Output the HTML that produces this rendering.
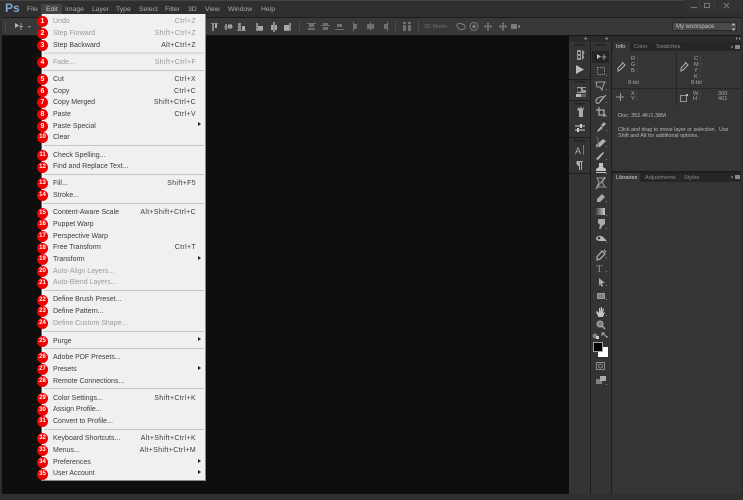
<!DOCTYPE html>
<html><head><meta charset="utf-8"><style>
html,body{margin:0;padding:0;background:#0e0e0e}
#a{position:relative;width:743px;height:500px;overflow:hidden;background:#0e0e0e;font-family:"Liberation Sans",sans-serif;font-size:7px;color:#b8b8b8}
#a div,#a span,#a svg{position:absolute}
.mb span{top:5px;font-size:6.8px;line-height:9px;color:#aaa;white-space:nowrap}
#m{left:41px;top:14px;width:165px;height:467px;background:#f0f0f0;border-right:1px solid #888;border-bottom:1px solid #888;border-left:1px solid #666;box-sizing:border-box}
.t,.k{position:absolute;font-size:7px;line-height:10px;color:#3c3c3c;white-space:nowrap;margin-top:-4px}
.t{left:53px}.k{right:547px;letter-spacing:.33px}
.d{color:#9a9a9a}
.s{position:absolute;left:44px;width:160px;height:1px;background:#c4c4c4}
.b{position:absolute;left:37px;width:11px;height:11px;margin-top:-5.5px;border-radius:50%;background:#f00000;color:#fff;font-size:6px;font-weight:bold;line-height:11px;text-align:center}
.r{position:absolute;left:198px;margin-top:-2px;width:0;height:0;border-left:3px solid #222;border-top:2px solid transparent;border-bottom:2px solid transparent}
.l{position:absolute;font-size:5.6px;line-height:8px;color:#a8a8a8;white-space:nowrap}
</style></head><body><div id="a">
<div style="left:0;top:0;width:743px;height:18px;background:#2f2f2f"></div>
<div style="left:0;top:17px;width:743px;height:1px;background:#1c1c1c"></div>
<div style="left:0;top:18px;width:743px;height:17px;background:#383838"></div>
<div style="left:0;top:35px;width:743px;height:1px;background:#161616"></div>
<div style="left:0;top:0;width:2px;height:500px;background:#2f2f2f"></div>
<div style="left:741px;top:0;width:2px;height:500px;background:#2f2f2f"></div>
<div style="left:0;top:494px;width:743px;height:6px;background:#2f2f2f"></div>
<div style="left:0;top:0;width:743px;height:1px;background:#444"></div>
<span style="left:5px;top:2px;font-size:12px;line-height:13px;font-weight:bold;color:#7fa8d0">Ps</span>
<div class="mb" style="left:0;top:0;width:500px;height:17px">
<div style="left:41px;top:4px;width:21px;height:13px;background:#444"></div>
<span style="left:27px">File</span><span style="left:46px;color:#ccc">Edit</span><span style="left:65px">Image</span><span style="left:92px">Layer</span><span style="left:116px">Type</span><span style="left:139px">Select</span><span style="left:165px">Filter</span><span style="left:188px">3D</span><span style="left:205px">View</span><span style="left:228px">Window</span><span style="left:261px">Help</span></div>
<svg style="left:0;top:18px" width="570" height="17" viewBox="0 0 570 17" fill="#8a8a8a">
<path d="M15 5l4 2.500-4 2.500z" fill="#bbb"/><path d="M21 5v7M19 8.500h4" stroke="#999" fill="none"/><path d="M28 8h3l-1.500 2z" fill="#999"/>
<rect x="5" y="3" width="1" height="11" fill="#4c4c4c"/>
<rect x="211" y="5" width="7" height="1"/><rect x="212" y="6" width="2" height="7"/><rect x="215" y="6" width="2" height="4" fill="#aaa"/>
<rect x="225" y="6" width="2" height="6"/><rect x="228" y="6.500" width="4" height="4" fill="#aaa"/><rect x="224" y="8.500" width="9" height="1"/>
<rect x="238" y="5" width="3" height="7"/><rect x="242" y="8" width="3" height="4" fill="#aaa"/><rect x="237" y="12" width="9" height="1"/>
<rect x="256" y="5" width="2" height="8"/><rect x="258" y="8" width="5" height="4" fill="#aaa"/><rect x="256" y="12" width="7" height="1"/>
<rect x="271" y="7" width="6" height="5" fill="#aaa"/><rect x="273" y="4" width="2" height="10"/>
<rect x="284" y="7" width="6" height="5" fill="#aaa"/><rect x="289" y="5" width="2" height="8"/><rect x="284" y="12" width="7" height="1"/>
<rect x="299" y="3" width="1" height="11" fill="#4c4c4c"/>
<g fill="#6f6f6f"><rect x="307" y="5" width="9" height="1"/><rect x="309" y="6" width="5" height="3"/><rect x="308" y="10" width="7" height="2"/>
<rect x="321" y="7" width="9" height="1"/><rect x="323" y="5" width="5" height="2"/><rect x="323" y="9" width="5" height="3"/>
<rect x="335" y="11" width="9" height="1"/><rect x="337" y="6" width="5" height="3"/>
<rect x="353" y="4" width="1" height="9"/><rect x="354" y="6" width="3" height="5"/>
<rect x="370" y="4" width="1" height="9"/><rect x="367" y="6" width="7" height="5"/>
<rect x="384" y="6" width="3" height="5"/><rect x="387" y="4" width="1" height="9"/></g>
<rect x="395" y="3" width="1" height="11" fill="#4c4c4c"/>
<g fill="#6f6f6f"><rect x="403" y="4" width="3" height="2"/><rect x="408" y="4" width="3" height="2"/><rect x="403" y="7" width="3" height="6"/><rect x="408" y="7" width="3" height="6"/></g>
<rect x="418" y="3" width="1" height="11" fill="#4c4c4c"/>
<path d="M457 8a3 2 0 0 1 5-2a4 3 0 0 1 2 5a4 2 0 0 1-5 0z" fill="none" stroke="#7c7c7c"/>
<circle cx="474" cy="8.500" r="4" fill="none" stroke="#7c7c7c" stroke-width="1"/><circle cx="474" cy="8.500" r="1.800" fill="#7c7c7c"/>
<path d="M488 4l1.500 2.500h-3zM488 13l1.500-2.500h-3zM483.500 8.500l2.500-1.500v3zM492.500 8.500l-2.500-1.500v3z" fill="#7c7c7c"/><circle cx="488" cy="8.500" r="1.500" fill="#7c7c7c"/>
<path d="M503 4l1.500 2.500h-3zM503 13l1.500-2.500h-3zM498.500 8.500l2.500-1.500v3zM507.500 8.500l-2.500-1.500v3z" fill="#7c7c7c"/><circle cx="503" cy="8.500" r="1.500" fill="#7c7c7c"/>
<rect x="511" y="6" width="6" height="5" fill="#7c7c7c"/><path d="M518 8l2-1.500v4L518 9z" fill="#7c7c7c"/>
</svg>
<span style="left:424px;top:22.500px;font-size:5.5px;line-height:8px;color:#707070;white-space:nowrap">3D Mode:</span>
<div style="left:672px;top:22px;width:65px;height:9px;background:#4a4a4a;outline:1px solid #2a2a2a;outline-offset:-1px"></div>
<span style="left:676px;top:22.500px;font-size:6px;line-height:9px;color:#c0c0c0;white-space:nowrap">My workspace</span>
<svg style="left:731px;top:23px" width="5" height="8"><path d="M2.500 0l2 2.500h-4zM2.500 8l2-2.500h-4z" fill="#bbb"/></svg>
<svg style="left:680px;top:0" width="62" height="13"><rect x="5" y="0" width="57" height="11" fill="#333"/><rect x="11" y="7" width="6" height="1" fill="#777"/><rect x="24.500" y="3.500" width="5" height="4" fill="none" stroke="#777"/><path d="M44 3l5 5M49 3l-5 5" stroke="#777" fill="none"/><rect x="19" y="0" width="1" height="11" fill="#3c3c3c"/><rect x="34" y="0" width="1" height="11" fill="#3c3c3c"/></svg>

<div style="left:569px;top:36px;width:172px;height:458px;background:#2a2a2a"></div>
<div style="left:569px;top:42px;width:21px;height:452px;background:#343434"></div>
<div style="left:591px;top:42px;width:20px;height:452px;background:#343434"></div>
<div style="left:612px;top:42px;width:129px;height:452px;background:#353535"></div>
<div style="left:590px;top:42px;width:1px;height:452px;background:#1e1e1e"></div>
<div style="left:611px;top:42px;width:1px;height:452px;background:#1e1e1e"></div>
<svg style="left:569px;top:36px" width="172" height="458" viewBox="569 36 172 458">
<path d="M584 38.500l2-1.500v3zM587 38.500l-1-1.500v3zM605 38.500l2-1.500v3zM608 38.500l-1-1.500v3zM736 37l2 1.500-2 1.500zM739 37l2 1.500-2 1.500z" fill="#8a8a8a"/>
<g fill="#1e1e1e"><rect x="569" y="79" width="21" height="1"/><rect x="569" y="100" width="21" height="1"/><rect x="569" y="137" width="21" height="1"/><rect x="569" y="173" width="21" height="1"/></g>
<g fill="#222"><rect x="574" y="44" width="11" height="1.500"/><rect x="574" y="81" width="11" height="1.500"/><rect x="574" y="103" width="11" height="1.500"/><rect x="574" y="140" width="11" height="1.500"/><rect x="595" y="44" width="11" height="1.500"/></g>
<path d="M577 50h4v10h-4zM582 50c3 1 3 4 1 5c2 1 1 4-1 5z" fill="#999"/><rect x="578" y="52" width="2" height="2" fill="#333"/><rect x="578" y="56" width="2" height="2" fill="#333"/>
<path d="M576 65l8 4.500-8 4.500z" fill="#bbb"/>
<path d="M577 87h9v6h-9z" fill="#999"/><circle cx="579" cy="90" r="2" fill="#333"/><rect x="583" y="88" width="3" height="2" fill="#333"/><rect x="576" y="94" width="10" height="3" fill="#bbb"/><rect x="581" y="94" width="5" height="3" fill="#666"/>
<path d="M577 110l2-3 1 2 1-3 1 3 2-2-1 4v6h-4v-6z" fill="#aaa"/>
<path d="M575 126h10M575 130h10" stroke="#999" stroke-width="1.500"/><rect x="580" y="124" width="2" height="4" fill="#ccc"/><rect x="577" y="128" width="2" height="4" fill="#ccc"/>
<text x="575" y="154" font-family="Liberation Sans" font-size="9" fill="#b0b0b0">A</text><rect x="583" y="145" width="1" height="10" fill="#777"/>
<path d="M577 161h6v1h-1v8h-1v-8h-1v8h-1v-4c-3 0-3-5-2-5z" fill="#aaa"/>
<rect x="592" y="51" width="17" height="12" fill="#242424"/>
<path d="M597 54l4 2.500-4 2.500z" fill="#bbb"/><path d="M604 54v6M601.500 57h5" stroke="#999" fill="none"/>
<rect x="597.500" y="67.500" width="7" height="7" fill="none" stroke="#888" stroke-dasharray="1.500 1"/>
<path d="M596 82l9 0-2 4-1 4-2-3-3 0z" fill="none" stroke="#999" stroke-width="1.100"/>
<path d="M596 101c0-3 5-5 8-4l-5 6c-2 1-3 0-3-2zM600 101l6-6" fill="none" stroke="#aaa" stroke-width="1.100"/>
<path d="M599 107v8h7M596 110h8v7" fill="none" stroke="#aaa" stroke-width="1.300"/>
<path d="M597 131l4-5 2 2-5 4zM601 125l3-3 2 2-3 3z" fill="#aaa"/>
<path d="M596 145l7-6 3 2-6 6h-4z" fill="#b0b0b0"/><path d="M596 138h2v9h-2" fill="none" stroke="#666"/>
<path d="M596 159l7-7 1 1-6 7z" fill="#bbb"/>
<path d="M599 163h4v4l3 2v2h-10v-2l3-2zM596 172h10v1h-10z" fill="#c4c4c4"/>
<path d="M597 178h8l-3 4 3 5h-8l2-5zM596 189l9-12" fill="none" stroke="#999" stroke-width="1.100"/>
<path d="M597 199l5-5 3 3-5 5h-3z" fill="#aaa"/>
<defs><linearGradient id="q"><stop offset="0" stop-color="#444"/><stop offset="1" stop-color="#ccc"/></linearGradient></defs>
<rect x="596" y="208" width="9" height="7" fill="url(#q)"/>
<path d="M598 219h7v5l-3 2-1 3h-2l1-4-2-2z" fill="#aaa"/>
<path d="M596 238c1-3 6-3 8 0l3 3h-6c-3 0-5-1-5-3z" fill="#b8b8b8"/><circle cx="599" cy="238" r="1.300" fill="#333"/>
<path d="M597 257l5-6 3 3-5 5-3 1zM604 250l2 2" fill="none" stroke="#aaa" stroke-width="1.300"/>
<text x="596" y="272" font-family="Liberation Serif" font-size="11" fill="#8c8c8c">T</text>
<path d="M599 278l6 5-3 0 1 3-1 1-2-3-1 2z" fill="#aaa"/>
<rect x="597.500" y="293.500" width="7" height="5" fill="#808080" stroke="#999"/>
<path d="M598 316l-2-4 1-1 2 2v-5h1v4l1-5h1v5l1-4 1 1-1 4 2-1-2 5h-5z" fill="#c4c4c4"/>
<circle cx="600" cy="324" r="3" fill="#808080" stroke="#aaa"/><path d="M602 326l3 3" stroke="#aaa" stroke-width="1.500"/>
<circle cx="595" cy="336" r="2.500" fill="#808080"/><rect x="596" y="336" width="3" height="3" fill="#ccc"/>
<path d="M605 333h-3v3M602 333l5 4M607 338v-2" stroke="#aaa" fill="none"/>
<rect x="598" y="347" width="10" height="10" fill="#fff"/>
<rect x="593.500" y="342.500" width="9" height="9" fill="#000" stroke="#a0a0a0"/>
<rect x="596.500" y="362.500" width="8" height="7" fill="none" stroke="#888"/><circle cx="600.500" cy="366" r="2" fill="none" stroke="#888"/>
<rect x="596" y="379" width="6" height="5" fill="#808080"/><rect x="600" y="376" width="6" height="5" fill="#aaa"/>
<g fill="#888"><rect x="606" y="75" width="1" height="1"/><rect x="606" y="89" width="1" height="1"/><rect x="606" y="102" width="1" height="1"/><rect x="606" y="116" width="1" height="1"/><rect x="606" y="130" width="1" height="1"/><rect x="606" y="146" width="1" height="1"/><rect x="606" y="159" width="1" height="1"/><rect x="606" y="173" width="1" height="1"/><rect x="606" y="187" width="1" height="1"/><rect x="606" y="201" width="1" height="1"/><rect x="606" y="215" width="1" height="1"/><rect x="606" y="228" width="1" height="1"/><rect x="606" y="242" width="1" height="1"/><rect x="606" y="257" width="1" height="1"/><rect x="606" y="271" width="1" height="1"/><rect x="606" y="285" width="1" height="1"/><rect x="606" y="299" width="1" height="1"/><rect x="606" y="315" width="1" height="1"/><rect x="606" y="384" width="1" height="1"/></g>
<rect x="612" y="42" width="129" height="9" fill="#262626"/>
<rect x="613" y="42" width="17" height="9" fill="#353535"/>
<rect x="612" y="171" width="129" height="2" fill="#1e1e1e"/>
<rect x="612" y="173" width="129" height="9" fill="#262626"/>
<rect x="613" y="173" width="27" height="9" fill="#353535"/>
<rect x="612" y="88" width="129" height="1" fill="#262626"/>
<rect x="676" y="52" width="1" height="36" fill="#262626"/><rect x="676" y="89" width="1" height="17" fill="#262626"/>
<path d="M618 68l5-5 2 2-5 5-2 1zM622 62l3 3" fill="none" stroke="#aaa" stroke-width="1.100"/>
<path d="M681 68l5-5 2 2-5 5-2 1zM685 62l3 3" fill="none" stroke="#aaa" stroke-width="1.100"/>
<path d="M620.500 93v8M616 97h8" stroke="#999" fill="none"/>
<rect x="680.500" y="95.500" width="6" height="6" fill="none" stroke="#999"/><rect x="686" y="94" width="2" height="2" fill="#bbb"/>
<rect x="735" y="45" width="5" height="4" fill="#888"/><rect x="731" y="46.500" width="2" height="1" fill="#aaa"/>
<rect x="735" y="175" width="5" height="4" fill="#888"/><rect x="731" y="176.500" width="2" height="1" fill="#aaa"/>
</svg>
<span class="l" style="left:616px;top:43px;color:#ddd">Info</span><span class="l" style="left:634px;top:43px;color:#888">Color</span><span class="l" style="left:656px;top:43px;color:#888">Swatches</span>
<span class="l" style="left:616px;top:174px;color:#ddd">Libraries</span><span class="l" style="left:645px;top:174px;color:#888">Adjustments</span><span class="l" style="left:684px;top:174px;color:#888">Styles</span>
<span class="l" style="left:631px;top:55.500px;line-height:6px">R :<br>G :<br>B :</span>
<span class="l" style="left:694px;top:55.500px;line-height:6px">C :<br>M :<br>Y :<br>K :</span>
<span class="l" style="left:628px;top:78.500px">8-bit</span><span class="l" style="left:691px;top:78.500px">8-bit</span>
<span class="l" style="left:631px;top:91.500px;line-height:5.500px">X :<br>Y :</span>
<span class="l" style="left:693px;top:91.500px;line-height:5.500px">W :<br>H :</span>
<span class="l" style="left:718px;top:91.500px;line-height:5.500px">300<br>401</span>
<span class="l" style="left:618px;top:111.500px;color:#b8b8b8">Doc: 352.4K/1.38M</span>
<span class="l" style="left:618px;top:127px;line-height:6px;font-size:5.35px;color:#b8b8b8">Click and drag to move layer or selection.&nbsp; Use<br>Shift and Alt for additional options.</span>

<div id="m"></div>
<span class="b" style="top:21.500px;font-size:7px">1</span><span class="t d" style="top:21px">Undo</span><span class="k d" style="top:21px">Ctrl+Z</span>
<span class="b" style="top:33px;font-size:7px">2</span><span class="t d" style="top:33px">Step Forward</span><span class="k d" style="top:33px">Shift+Ctrl+Z</span>
<span class="b" style="top:45px;font-size:7px">3</span><span class="t" style="top:44.500px">Step Backward</span><span class="k" style="top:44.500px">Alt+Ctrl+Z</span>
<div class="s" style="top:52px;height:2px;background:#ddd"></div>
<span class="b" style="top:62px;font-size:7px">4</span><span class="t d" style="top:61.500px">Fade...</span><span class="k d" style="top:61.500px">Shift+Ctrl+F</span>
<div class="s" style="top:70px;height:1px"></div>
<span class="b" style="top:79px;font-size:7px">5</span><span class="t" style="top:78.500px">Cut</span><span class="k" style="top:78.500px">Ctrl+X</span>
<span class="b" style="top:91px;font-size:7px">6</span><span class="t" style="top:90.500px">Copy</span><span class="k" style="top:90.500px">Ctrl+C</span>
<span class="b" style="top:102px;font-size:7px">7</span><span class="t" style="top:102px">Copy Merged</span><span class="k" style="top:102px">Shift+Ctrl+C</span>
<span class="b" style="top:114px;font-size:7px">8</span><span class="t" style="top:113.500px">Paste</span><span class="k" style="top:113.500px">Ctrl+V</span>
<span class="b" style="top:126px;font-size:7px">9</span><span class="t" style="top:126px">Paste Special</span><i class="r" style="top:124px"></i>
<span class="b" style="top:137px">10</span><span class="t" style="top:137px">Clear</span>
<div class="s" style="top:145px"></div>
<span class="b" style="top:155px">11</span><span class="t" style="top:154.500px">Check Spelling...</span>
<span class="b" style="top:167px">12</span><span class="t" style="top:166px">Find and Replace Text...</span>
<div class="s" style="top:174px"></div>
<span class="b" style="top:183px">13</span><span class="t" style="top:183px">Fill...</span><span class="k" style="top:183px">Shift+F5</span>
<span class="b" style="top:195px">14</span><span class="t" style="top:195px">Stroke...</span>
<div class="s" style="top:203px"></div>
<span class="b" style="top:213px">15</span><span class="t" style="top:212px">Content-Aware Scale</span><span class="k" style="top:212px">Alt+Shift+Ctrl+C</span>
<span class="b" style="top:224px">16</span><span class="t" style="top:223.500px">Puppet Warp</span>
<span class="b" style="top:236px">17</span><span class="t" style="top:235.500px">Perspective Warp</span>
<span class="b" style="top:248px">18</span><span class="t" style="top:247px">Free Transform</span><span class="k" style="top:247px">Ctrl+T</span>
<span class="b" style="top:259px">19</span><span class="t" style="top:259px">Transform</span><i class="r" style="top:257.500px"></i>
<span class="b" style="top:271px">20</span><span class="t d" style="top:270.500px">Auto-Align Layers...</span>
<span class="b" style="top:283px">21</span><span class="t d" style="top:282px">Auto-Blend Layers...</span>
<div class="s" style="top:290px"></div>
<span class="b" style="top:300px">22</span><span class="t" style="top:299px">Define Brush Preset...</span>
<span class="b" style="top:311px">23</span><span class="t" style="top:311px">Define Pattern...</span>
<span class="b" style="top:323px">24</span><span class="t d" style="top:322.500px">Define Custom Shape...</span>
<div class="s" style="top:331px"></div>
<span class="b" style="top:341px">25</span><span class="t" style="top:340.500px">Purge</span><i class="r" style="top:339px"></i>
<div class="s" style="top:348px"></div>
<span class="b" style="top:357px">26</span><span class="t" style="top:357px">Adobe PDF Presets...</span>
<span class="b" style="top:369px">27</span><span class="t" style="top:369px">Presets</span><i class="r" style="top:367.500px"></i>
<span class="b" style="top:381px">28</span><span class="t" style="top:380.500px">Remote Connections...</span>
<div class="s" style="top:388px"></div>
<span class="b" style="top:398px">29</span><span class="t" style="top:397.500px">Color Settings...</span><span class="k" style="top:397.500px">Shift+Ctrl+K</span>
<span class="b" style="top:410px">30</span><span class="t" style="top:409px">Assign Profile...</span>
<span class="b" style="top:421px">31</span><span class="t" style="top:420.500px">Convert to Profile...</span>
<div class="s" style="top:429px"></div>
<span class="b" style="top:438px">32</span><span class="t" style="top:438px">Keyboard Shortcuts...</span><span class="k" style="top:438px">Alt+Shift+Ctrl+K</span>
<span class="b" style="top:450px">33</span><span class="t" style="top:449.500px">Menus...</span><span class="k" style="top:449.500px">Alt+Shift+Ctrl+M</span>
<span class="b" style="top:462px">34</span><span class="t" style="top:461.500px">Preferences</span><i class="r" style="top:460.500px"></i>
<span class="b" style="top:474px">35</span><span class="t" style="top:473px">User Account</span><i class="r" style="top:472px"></i>
</div></body></html>
